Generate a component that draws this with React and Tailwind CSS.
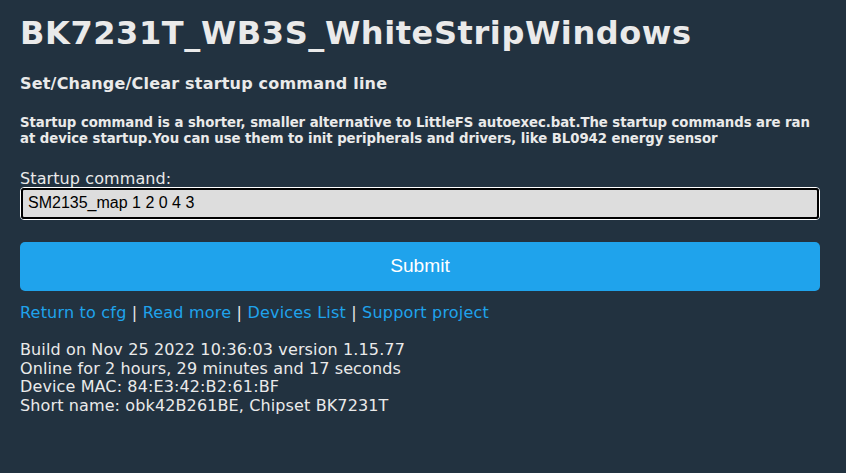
export default function App() {
  return (
    <div className="min-h-[473px] w-full bg-[#223240] text-[#eaeaea]">
      <div className="w-[800px] ml-[20px] pt-[15px] font-['DejaVu_Sans',Verdana,sans-serif]">
        <h1 className="text-[32px] font-bold leading-[37px] tracking-[0.6px]">BK7231T_WB3S_WhiteStripWindows</h1>
        <h3 className="mt-[22px] text-[16px] font-bold leading-[19px] tracking-[0.2px]">Set/Change/Clear startup command line</h3>
        <h5 className="mt-[22px] text-[13.28px] font-bold leading-[15.5px] tracking-[-0.05px]">
          Startup command is a shorter, smaller alternative to LittleFS autoexec.bat.The startup commands are ran at device startup.You can use them to init peripherals and drivers, like BL0942 energy sensor
        </h5>
        <form className="mt-[24.5px]" onSubmit={(e) => e.preventDefault()}>
          <label className="block text-[16px] leading-[16px] tracking-[0.1px]">Startup command:</label>
          <div className="rounded-[4px] border border-white">
            <input
              type="text"
              defaultValue="SM2135_map 1 2 0 4 3"
              className="block h-[31px] w-full rounded-[3px] border-2 border-black bg-[#dddddd] px-[5px] font-['Liberation_Sans',Arial,sans-serif] text-[16px] text-black outline-none"
            />
          </div>
          <button
            type="submit"
            className="mt-[22px] block h-[49px] w-full rounded-[5px] bg-[#1fa3ec] font-['Liberation_Sans',Arial,sans-serif] text-[19.2px] text-white"
          >
            Submit
          </button>
        </form>
        <div className="mt-[13px] text-[16px] leading-[18.5px] tracking-[0.2px]">
          <a className="text-[#1fa3ec]" href="#">Return to cfg</a> | <a className="text-[#1fa3ec]" href="#">Read more</a> | <a className="text-[#1fa3ec]" href="#">Devices List</a> | <a className="text-[#1fa3ec]" href="#">Support project</a>
        </div>
        <div className="mt-[19px] text-[16px] leading-[18.6px] tracking-[0.12px]">
          <div>Build on Nov 25 2022 10:36:03 version 1.15.77</div>
          <div>Online for 2 hours, 29 minutes and 17 seconds</div>
          <div>Device MAC: 84:E3:42:B2:61:BF</div>
          <div>Short name: obk42B261BE, Chipset BK7231T</div>
        </div>
      </div>
    </div>
  );
}
